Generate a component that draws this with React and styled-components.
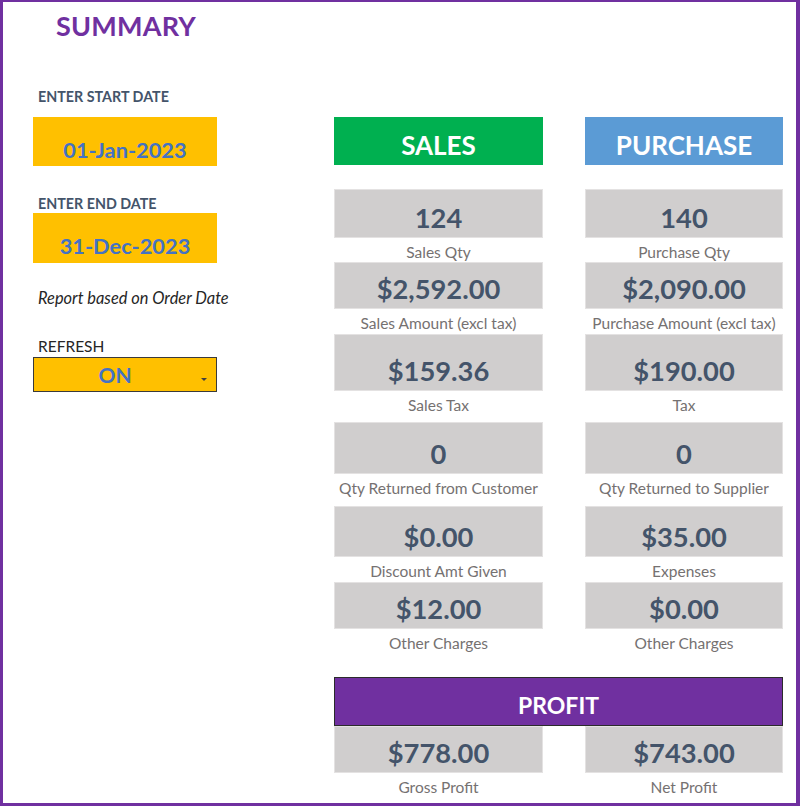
import React from "react";
import styled, { createGlobalStyle } from "styled-components";

const Global = createGlobalStyle`
  html, body { margin: 0; padding: 0; background: #fff; }
  body { font-family: Lato, "Liberation Sans", sans-serif; }
`;

const Frame = styled.div`
  box-sizing: border-box;
  width: 800px;
  height: 806px;
  border: 3px solid #7030a0;
  border-top-width: 2px;
  border-right-width: 4px;
  overflow: hidden;
`;

const Title = styled.h1`
  margin: 0;
  padding: 7px 0 0 53px;
  height: 46px;
  box-sizing: border-box;
  font-size: 27px;
  line-height: 34px;
  font-weight: 700;
  color: #7030a0;
  letter-spacing: 0.2px;
`;

const Body = styled.div`
  display: flex;
  padding-left: 30px;
  gap: 117px;
`;

const Left = styled.div`
  width: 184px;
  display: flex;
  flex-direction: column;
  padding-top: 40px;
`;

const FieldLabel = styled.div`
  font-size: ${(p) => (p.$bold ? 14.3 : 15.5)}px;
  font-weight: ${(p) => (p.$bold ? 700 : 400)};
  color: ${(p) => (p.$bold ? "#44546a" : "#262626")};
  line-height: 18px;
  padding-left: 5px;
  white-space: nowrap;
  margin-top: ${(p) => p.$mt || 0}px;
  margin-bottom: ${(p) => p.$mb || 0}px;
`;

const DateBox = styled.div`
  height: ${(p) => p.$h}px;
  background: #ffc000;
  display: flex;
  align-items: flex-end;
  justify-content: center;
  padding-bottom: ${(p) => p.$pb}px;
  box-sizing: border-box;
  font-size: 21.8px;
  line-height: 26px;
  font-weight: 700;
  color: #4472c4;
`;

const Note = styled.div`
  font-style: italic;
  font-size: 16.4px;
  line-height: 18px;
  color: #262626;
  padding-left: 5px;
  margin-top: 26px;
  white-space: nowrap;
`;

const Dropdown = styled.div`
  position: relative;
  height: 35px;
  box-sizing: border-box;
  border: 1px solid #3a3a3a;
  background: #ffc000;
  display: flex;
  align-items: center;
  padding-right: 20px;
`;

const DropValue = styled.span`
  flex: 1;
  text-align: center;
  font-size: 21px;
  font-weight: 700;
  color: #4472c4;
  line-height: 24px;
`;

const Caret = styled.span`
  position: absolute;
  right: 9px;
  top: 20px;
  width: 0;
  height: 0;
  border-left: 3.5px solid transparent;
  border-right: 3.5px solid transparent;
  border-top: 3.5px solid #404040;
`;

const Right = styled.div`
  width: 449px;
  padding-top: 69px;
`;

const Grid = styled.div`
  display: grid;
  grid-template-columns: 209px 198px;
  column-gap: 42px;
`;

const Header = styled.div`
  grid-column: ${(p) => (p.$span ? "1 / -1" : "auto")};
  height: ${(p) => p.$h}px;
  box-sizing: border-box;
  background: ${(p) => p.$bg};
  border: ${(p) => (p.$outline ? "1px solid #2b2b2b" : "none")};
  display: flex;
  align-items: flex-end;
  justify-content: center;
  padding-bottom: ${(p) => p.$pb}px;
  color: #fff;
  font-size: ${(p) => p.$fs || 26}px;
  line-height: 30px;
  font-weight: 700;
  margin-bottom: ${(p) => p.$mb || 0}px;
`;

const Stat = styled.div`
  height: ${(p) => p.$block}px;
  display: flex;
  flex-direction: column;
`;

const Card = styled.div`
  height: ${(p) => p.$h}px;
  box-sizing: border-box;
  background: #d0cece;
  border: 1px solid #e4e2e2;
  display: flex;
  align-items: flex-end;
  justify-content: center;
  padding-bottom: 3px;
  font-size: 27.3px;
  line-height: 32px;
  font-weight: 700;
  color: #44546a;
`;

const Caption = styled.div`
  margin-top: 5px;
  text-align: center;
  font-size: 15.5px;
  line-height: 18px;
  color: #757171;
  white-space: nowrap;
`;

const rows = [
  { h: 49, block: 73, a: ["124", "Sales Qty"], b: ["140", "Purchase Qty"] },
  { h: 47, block: 72, a: ["$2,592.00", "Sales Amount (excl tax)"], b: ["$2,090.00", "Purchase Amount (excl tax)"] },
  { h: 57, block: 88, a: ["$159.36", "Sales Tax"], b: ["$190.00", "Tax"] },
  { h: 52, block: 84, a: ["0", "Qty Returned from Customer"], b: ["0", "Qty Returned to Supplier"] },
  { h: 51, block: 76, a: ["$0.00", "Discount Amt Given"], b: ["$35.00", "Expenses"] },
  { h: 47, block: 95, a: ["$12.00", "Other Charges"], b: ["$0.00", "Other Charges"] },
];

const StatBox = ({ h, block, value, label }) => (
  <Stat $block={block}>
    <Card $h={h}>{value}</Card>
    <Caption>{label}</Caption>
  </Stat>
);

export default function App() {
  return (
    <>
      <Global />
      <Frame>
        <Title>SUMMARY</Title>
        <Body>
          <Left>
            <FieldLabel $bold $mb={11}>ENTER START DATE</FieldLabel>
            <DateBox $h={49} $pb={3}>01-Jan-2023</DateBox>
            <FieldLabel $bold $mt={29} $mb={0}>ENTER END DATE</FieldLabel>
            <DateBox $h={50} $pb={4}>31-Dec-2023</DateBox>
            <Note>Report based on Order Date</Note>
            <FieldLabel $mt={30} $mb={2}>REFRESH</FieldLabel>
            <Dropdown>
              <DropValue>ON</DropValue>
              <Caret />
            </Dropdown>
          </Left>
          <Right>
            <Grid>
              <Header $h={48} $bg="#00b050" $pb={5} $mb={24}>SALES</Header>
              <Header $h={48} $bg="#5b9bd5" $pb={5} $mb={24}>PURCHASE</Header>
              {rows.map((r, i) => (
                <React.Fragment key={i}>
                  <StatBox h={r.h} block={r.block} value={r.a[0]} label={r.a[1]} />
                  <StatBox h={r.h} block={r.block} value={r.b[0]} label={r.b[1]} />
                </React.Fragment>
              ))}
              <Header $span $outline $h={49} $bg="#7030a0" $pb={5} $fs={23}>PROFIT</Header>
              <StatBox h={47} block={78} value="$778.00" label="Gross Profit" />
              <StatBox h={47} block={78} value="$743.00" label="Net Profit" />
            </Grid>
          </Right>
        </Body>
      </Frame>
    </>
  );
}
